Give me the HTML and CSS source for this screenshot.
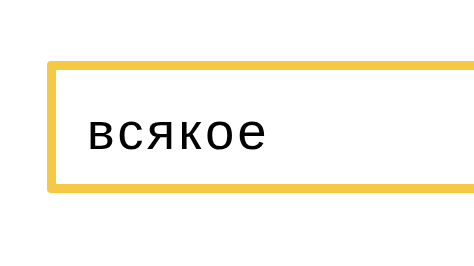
FILE: index.html
```html
<!DOCTYPE html>
<html>
<head>
<meta charset="utf-8">
<link rel="stylesheet" href="styles.css">
</head>
<body>
<div class="frame">
  <span class="word">всякое</span>
</div>
</body>
</html>
```

FILE: styles.css
```css
html, body {
  margin: 0;
  padding: 0;
  background: #ffffff;
  width: 474px;
  height: 266px;
  overflow: hidden;
}
body {
  padding-top: 61px;
  padding-left: 47px;
  box-sizing: border-box;
}
.frame {
  box-sizing: border-box;
  width: 450px;
  height: 132px;
  border: 9px solid #f6c944;
  border-radius: 4px;
  display: flex;
  align-items: flex-start;
  padding-left: 31px;
  padding-top: 35px;
}
.word {
  font-family: "Liberation Sans", Arial, sans-serif;
  font-size: 52px;
  letter-spacing: 3.4px;
  color: #000;
  line-height: 52px;
}
```
